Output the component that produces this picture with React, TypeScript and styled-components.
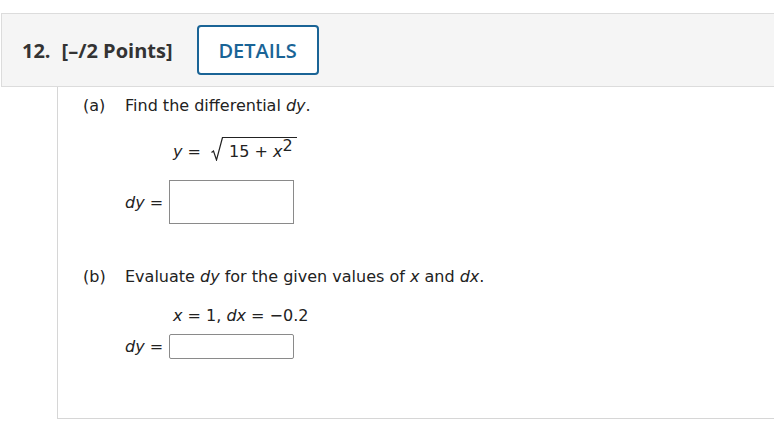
import React from 'react'
import styled, { createGlobalStyle } from 'styled-components'

const GlobalStyle = createGlobalStyle`
  html, body {
    margin: 0;
    padding: 0;
    background: #fff;
    overflow: hidden;
  }
`

const Page = styled.div`
  padding-top: 13px;
  width: 774px;
  height: 439px;
  overflow: hidden;
`

const Header = styled.div`
  display: flex;
  align-items: center;
  margin-left: 1px;
  width: 800px;
  height: 72px;
  background: #f5f5f5;
  border: 1px solid #dcdcdc;
  padding-left: 20px;
  box-sizing: content-box;
  font-family: 'Open Sans', sans-serif;
  font-weight: 700;
  font-size: 20px;
  color: #333;
`

const Number = styled.span`
  margin-right: 11px;
`

const Points = styled.span`
  margin-right: 24px;
`

const DetailsButton = styled.button`
  width: 122px;
  height: 50px;
  background: #fff;
  border: 2px solid #1a6496;
  border-radius: 4px;
  color: #1a6496;
  font-family: 'Open Sans', sans-serif;
  font-size: 20px;
  font-weight: 600;
  padding: 0;
  cursor: pointer;
`

const Body = styled.div`
  margin-left: 57px;
  width: 760px;
  height: 332px;
  border-left: 1px solid #d6d6d6;
  border-bottom: 1px solid #d6d6d6;
  padding: 8px 0 0 25px;
  box-sizing: border-box;
  font-family: 'DejaVu Sans', Verdana, sans-serif;
  font-size: 16px;
  color: #222;
`

const Part = styled.div<{ gap: number }>`
  display: grid;
  grid-template-columns: 42px auto;
  margin-bottom: ${({ gap }) => gap}px;
`

const Label = styled.div`
  line-height: 22px;
`

const Content = styled.div`
  display: flex;
  flex-direction: column;
`

const Prompt = styled.div`
  line-height: 22px;
`

const Var = styled.i`
  font-style: italic;
`

const Equation = styled.div<{ top: number }>`
  display: flex;
  align-items: flex-end;
  margin: ${({ top }) => top}px 0 0 48px;
  line-height: 20px;
  white-space: pre;
`

const Root = styled.span`
  display: inline-flex;
  align-items: flex-start;
  margin-left: 10px;
`

const RadicalSign = styled.svg`
  display: block;
  width: 12px;
  height: 24px;
  flex-shrink: 0;
`

const Radicand = styled.span`
  display: inline-block;
  border-top: 1px solid #222;
  padding: 4px 4px 0 7px;
  margin-left: -1px;
  line-height: 20px;
`

const Sup = styled.span`
  font-size: 16px;
  position: relative;
  top: -6px;
`

const AnswerRow = styled.div<{ top: number }>`
  display: flex;
  align-items: center;
  margin-top: ${({ top }) => top}px;
`

const AnswerLabel = styled.span`
  width: 44px;
  white-space: pre;
`

const AnswerBox = styled.input<{ tall?: boolean }>`
  width: 125px;
  height: ${({ tall }) => (tall ? 44 : 25)}px;
  box-sizing: border-box;
  border: 1px solid #8a8a8a;
  border-radius: ${({ tall }) => (tall ? 0 : 2)}px;
  background: #fff;
  padding: 0;
`

export default function App() {
  return (
    <Page>
      <GlobalStyle />
      <Header>
        <Number>12.</Number>
        <Points>[–/2 Points]</Points>
        <DetailsButton>DETAILS</DetailsButton>
      </Header>
      <Body>
        <Part gap={42}>
          <Label>(a)</Label>
          <Content>
            <Prompt>
              Find the differential <Var>dy</Var>.
            </Prompt>
            <Equation top={20}>
              <span>
                <Var>y</Var> =
              </span>
              <Root>
                <RadicalSign viewBox="0 0 12 24">
                  <path
                    d="M0.5 15.5 L2.5 14 L5.5 23 L11.5 0.5"
                    fill="none"
                    stroke="#222"
                    strokeWidth="1.2"
                  />
                </RadicalSign>
                <Radicand>
                  15 + <Var>x</Var>
                  <Sup>2</Sup>
                </Radicand>
              </Root>
            </Equation>
            <AnswerRow top={18}>
              <AnswerLabel>
                <Var>dy</Var> =
              </AnswerLabel>
              <AnswerBox tall />
            </AnswerRow>
          </Content>
        </Part>
        <Part gap={0}>
          <Label>(b)</Label>
          <Content>
            <Prompt>
              Evaluate <Var>dy</Var> for the given values of <Var>x</Var> and{' '}
              <Var>dx</Var>.
            </Prompt>
            <Equation top={18}>
              <span>
                <Var>x</Var> = 1, <Var>dx</Var> = −0.2
              </span>
            </Equation>
            <AnswerRow top={8}>
              <AnswerLabel>
                <Var>dy</Var> =
              </AnswerLabel>
              <AnswerBox />
            </AnswerRow>
          </Content>
        </Part>
      </Body>
    </Page>
  )
}
